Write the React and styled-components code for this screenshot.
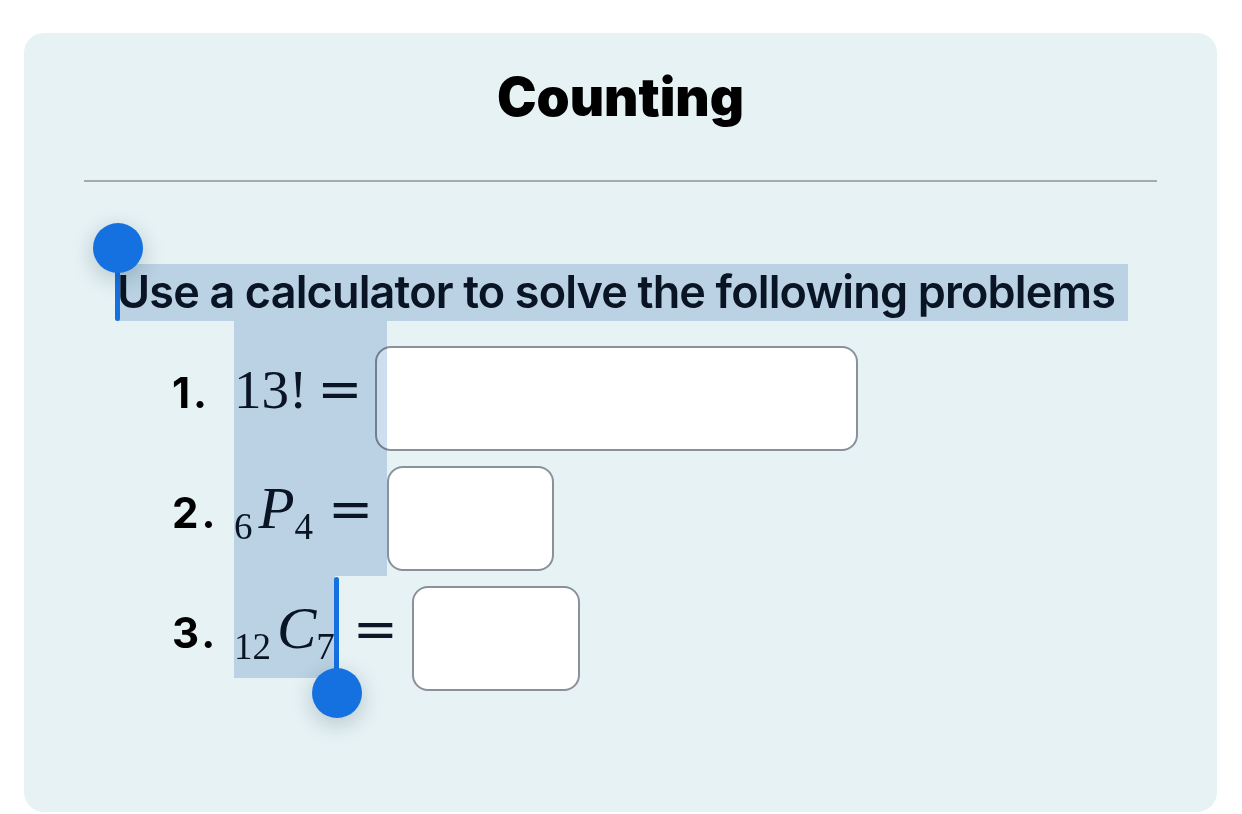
import React from 'react';
import styled, { createGlobalStyle } from 'styled-components';

const GlobalStyle = createGlobalStyle`
  html, body {
    margin: 0;
    padding: 0;
    background: #ffffff;
  }
  body {
    font-family: 'Inter', 'Liberation Sans', sans-serif;
  }
`;

const Page = styled.div`
  padding: 33px 25px 0 24px;
  height: 814px;
  box-sizing: border-box;
  overflow: hidden;
`;

const Card = styled.div`
  position: relative;
  background: #e6f2f4;
  border-radius: 20px;
  height: 779px;
  padding: 0 60px;
  box-sizing: border-box;
`;

const Title = styled.h1`
  margin: 0;
  padding-top: 32px;
  font-size: 53px;
  line-height: 64px;
  font-weight: 900;
  text-align: center;
  color: #000;
`;

const Rule = styled.hr`
  margin: 51px 0 0;
  border: none;
  height: 2px;
  background: #a7a9ac;
`;

const Body = styled.div`
  padding-left: 33px;
  margin-top: 81px;
`;

const Prompt = styled.p`
  margin: 0;
  font-size: 45px;
  line-height: 57px;
  font-weight: 600;
  letter-spacing: -0.85px;
  color: #0b1727;
  white-space: nowrap;
`;

const List = styled.ol`
  list-style: none;
  margin: 26px 0 0;
  padding: 0;
  display: flex;
  flex-direction: column;
  gap: 15px;
`;

const Row = styled.li`
  display: flex;
  align-items: center;
  height: 105px;
`;

const Label = styled.span`
  display: flex;
  align-items: baseline;
  padding-bottom: 19px;
`;

const Num = styled.span`
  width: 62px;
  margin-left: 55px;
  font-size: 42px;
  line-height: 1;
  font-weight: 700;
  letter-spacing: 3px;
  color: #000;
`;

const Math = styled.span`
  font-family: 'Liberation Serif', 'DejaVu Serif', serif;
  font-size: 55px;
  line-height: 1;
  color: #0b1727;
  white-space: nowrap;
`;

const Var = styled.i`
  font-style: italic;
  font-size: 59px;
  line-height: 0;
  margin-left: ${(p) => p.$gap || 0}px;
`;

const Sub = styled.sub`
  font-size: 37px;
  vertical-align: -11px;
  line-height: 0;
`;

const Eq = styled.span`
  font-family: 'DejaVu Serif', serif;
  font-size: 54px;
  line-height: 0;
  margin: 0 ${(p) => p.$right}px 0 ${(p) => p.$left}px;
`;

const Answer = styled.input`
  width: ${(p) => p.$w}px;
  height: 105px;
  box-sizing: border-box;
  border: 2px solid #89919b;
  border-radius: 16px;
  background: #fff;
  font-size: 40px;
  padding: 0 16px;
  outline: none;
`;

// selection highlight, drawn over content with multiply
const Highlight = styled.div`
  position: absolute;
  background: #cedeee;
  mix-blend-mode: multiply;
  pointer-events: none;
`;

const Handle = styled.div`
  position: absolute;
  width: 5px;
  background: #1570e0;
  border-radius: 3px;
  pointer-events: none;

  &::before {
    content: '';
    position: absolute;
    left: 50%;
    width: 50px;
    height: 50px;
    margin-left: -25px;
    border-radius: 50%;
    background: #1570e0;
    box-shadow: 0 6px 22px rgba(0, 40, 60, 0.22);
    ${(p) => (p.$top ? 'top: -25px;' : 'bottom: -25px;')}
  }
`;

const highlights = [
  { left: 93, top: 231, width: 1011, height: 57 },
  { left: 210, top: 288, width: 153, height: 255 },
  { left: 210, top: 543, width: 101, height: 102 },
];

export default function App() {
  return (
    <>
      <GlobalStyle />
      <Page>
        <Card>
          <Title>Counting</Title>
          <Rule />
          <Body>
            <Prompt>Use a calculator to solve the following problems</Prompt>
            <List>
              <Row>
                <Label>
                  <Num>1.</Num>
                  <Math>
                    13!<Eq $left={10} $right={12}>=</Eq>
                  </Math>
                </Label>
                <Answer $w={483} />
              </Row>
              <Row>
                <Label>
                  <Num>2.</Num>
                  <Math>
                    <Sub>6</Sub>
                    <Var $gap={6}>P</Var>
                    <Sub>4</Sub>
                    <Eq $left={15} $right={14}>=</Eq>
                  </Math>
                </Label>
                <Answer $w={167} />
              </Row>
              <Row>
                <Label>
                  <Num>3.</Num>
                  <Math>
                    <Sub>12</Sub>
                    <Var $gap={6}>C</Var>
                    <Sub>7</Sub>
                    <Eq $left={18} $right={14}>=</Eq>
                  </Math>
                </Label>
                <Answer $w={168} />
              </Row>
            </List>
          </Body>
          {highlights.map((h, i) => (
            <Highlight key={i} style={h} />
          ))}
          <Handle $top style={{ left: 91, top: 215, height: 73 }} />
          <Handle style={{ left: 310, top: 544, height: 116 }} />
        </Card>
      </Page>
    </>
  );
}
